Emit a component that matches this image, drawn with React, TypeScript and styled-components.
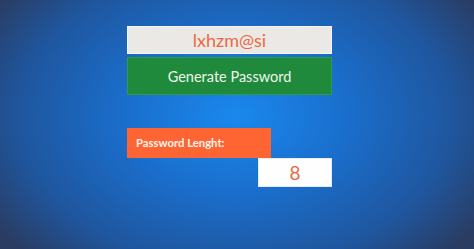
import React from 'react'
import styled, { createGlobalStyle } from 'styled-components'

const Global = createGlobalStyle`
  html, body { margin: 0; padding: 0; }
  body {
    width: 474px;
    height: 249px;
    overflow: hidden;
    font-family: Lato, "Open Sans", sans-serif;
  }
`

const Page = styled.main`
  width: 474px;
  height: 249px;
  box-sizing: border-box;
  padding: 26px 0 0 127px;
  background: radial-gradient(ellipse 290px 200px at 236px 116px, #1a88ee 0%, #1a6dca 40%, #1f569e 75%, #2a3c62 100%);
`

const Column = styled.div`
  width: 205px;
  display: flex;
  flex-direction: column;
`

const Output = styled.div`
  height: 28px;
  box-sizing: border-box;
  background: #ebe9e5;
  border: 1px solid #f6f6f4;
  color: #ea6a45;
  font-size: 18px;
  line-height: 26px;
  text-align: center;
`

const GenerateButton = styled.button`
  margin-top: 3px;
  height: 38px;
  border: 1px solid #2f9a4a;
  background: #208a3c;
  color: #eef6ee;
  font-family: Lato, "Open Sans", sans-serif;
  font-size: 14.5px;
  padding: 0;
  cursor: pointer;
`

const LengthLabel = styled.div`
  margin-top: 33px;
  width: 144px;
  height: 30px;
  box-sizing: border-box;
  padding: 0 0 1px 9px;
  background: #fe6532;
  color: #fff4ee;
  font-size: 11.3px;
  font-weight: 700;
  display: flex;
  align-items: center;
`

const LengthInput = styled.div`
  align-self: flex-end;
  width: 74px;
  height: 29px;
  box-sizing: border-box;
  background: #fefefe;
  border: 1px solid #e6ecf4;
  color: #ea6a45;
  font-size: 19px;
  line-height: 27px;
  text-align: center;
`

const App: React.FC = () => {
  return (
    <Page>
      <Global />
      <Column>
        <Output>lxhzm@si</Output>
        <GenerateButton>Generate Password</GenerateButton>
        <LengthLabel>Password Lenght:</LengthLabel>
        <LengthInput>8</LengthInput>
      </Column>
    </Page>
  )
}

export default App
